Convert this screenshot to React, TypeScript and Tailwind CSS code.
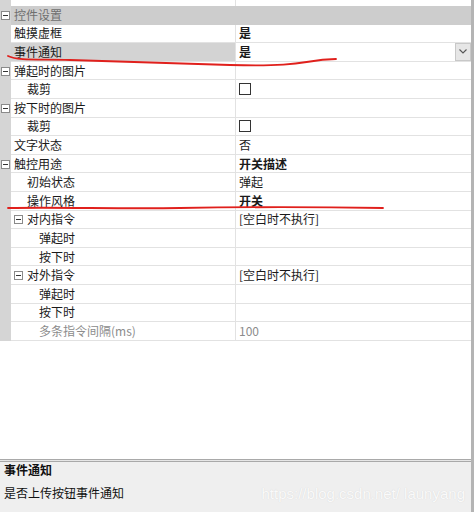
import React from 'react';

type Row = {
  name: string;
  value?: string;
  level: number; // indentation inside the name column
  margin?: boolean; // collapse box in the left gutter
  inner?: boolean; // collapse box inside the name column
  bold?: boolean;
  check?: boolean;
  dim?: boolean;
  selected?: boolean;
  category?: boolean;
};

const ROWS: Row[] = [
  { name: '控件设置', level: 0, margin: true, category: true },
  { name: '触摸虚框', value: '是', level: 0, bold: true },
  { name: '事件通知', value: '是', level: 0, bold: true, selected: true },
  { name: '弹起时的图片', level: 0, margin: true },
  { name: '裁剪', level: 1, check: true },
  { name: '按下时的图片', level: 0, margin: true },
  { name: '裁剪', level: 1, check: true },
  { name: '文字状态', value: '否', level: 0 },
  { name: '触控用途', value: '开关描述', level: 0, margin: true, bold: true },
  { name: '初始状态', value: '弹起', level: 1 },
  { name: '操作风格', value: '开关', level: 1, bold: true },
  { name: '对内指令', value: '[空白时不执行]', level: 1, inner: true },
  { name: '弹起时', level: 2 },
  { name: '按下时', level: 2 },
  { name: '对外指令', value: '[空白时不执行]', level: 1, inner: true },
  { name: '弹起时', level: 2 },
  { name: '按下时', level: 2 },
  { name: '多条指令间隔(ms)', value: '100', level: 2, dim: true },
];

function MinusBox() {
  return (
    <svg width="9" height="9" viewBox="0 0 9 9" className="shrink-0">
      <rect x="0.5" y="0.5" width="8" height="8" fill="#fff" stroke="#8a8a8a" />
      <path d="M2 4.5h5" stroke="#333" strokeWidth="1" />
    </svg>
  );
}

function PropRow({ row }: { row: Row }) {
  const pad = row.level === 0 ? 'pl-[3px]' : row.level === 1 ? 'pl-[16px]' : 'pl-[28px]';
  return (
    <div className="flex h-[18.6px] items-stretch">
      <div className="flex w-[11px] shrink-0 items-center justify-center bg-[#d5d5d5]">
        {row.margin && <MinusBox />}
      </div>
      {row.category ? (
        <div className="flex flex-1 items-center bg-[#cdcdcd] pl-[3px] text-[#6f6f6f]">{row.name}</div>
      ) : (
        <>
          <div
            className={`flex w-[225px] shrink-0 items-center border-b border-r border-[#e2e2e2] ${pad} ${
              row.selected ? 'bg-[#d3d3d3]' : 'bg-white'
            } ${row.dim ? 'text-[#8c8c8c]' : 'text-[#1a1a1a]'}`}
          >
            {row.inner && (
              <span className="-ml-[13px] mr-[4px] flex">
                <MinusBox />
              </span>
            )}
            {row.name}
          </div>
          <div
            className={`flex flex-1 items-center border-b border-[#e2e2e2] bg-white pl-[3px] ${
              row.bold ? 'font-bold' : ''
            } ${row.dim ? 'text-[#8c8c8c]' : 'text-[#1a1a1a]'}`}
          >
            {row.check && <span className="h-[12px] w-[12px] border border-[#333] bg-white" />}
            <span className="flex-1">{row.value}</span>
            {row.selected && (
              <span className="flex h-full w-[16px] items-center justify-center border border-[#c8c8c8] bg-[#e6e6e6]">
                <svg width="8" height="5" viewBox="0 0 8 5">
                  <path d="M0.5 0.5L4 4L7.5 0.5" fill="none" stroke="#555" strokeWidth="1.1" />
                </svg>
              </span>
            )}
          </div>
        </>
      )}
    </div>
  );
}

export default function App() {
  return (
    <div
      className="relative flex h-[512px] w-[474px] flex-col overflow-hidden border-r-[3px] border-[#b4b4b4] bg-white text-[12px] leading-none"
      style={{ fontFamily: '"Noto Sans CJK SC", "Noto Sans", sans-serif' }}
    >
      {/* sliver of the row scrolled off the top */}
      <div className="flex h-[6px]">
        <div className="w-[11px] bg-[#d5d5d5]" />
        <div className="w-[225px] border-r border-[#e2e2e2]" />
      </div>

      {ROWS.map((r, i) => (
        <PropRow key={i} row={r} />
      ))}

      <div className="flex-1 bg-white" />

      {/* help panel */}
      <div className="h-[3px] border-y border-[#a9a9a9] bg-[#e6e6e6]" />
      <div className="relative flex h-[50px] flex-col gap-[11px] bg-[#efefef] px-[4px] pt-[2px] text-[#111]">
        <div className="font-bold">事件通知</div>
        <div>是否上传按钮事件通知</div>
        <div
          className="absolute bottom-[11px] right-[6px] text-[15px] text-[#fafafa]"
          style={{ fontFamily: '"Liberation Sans", sans-serif', textShadow: '0 0 1px #d0d0d0' }}
        >
          https://blog.csdn.net/ launyang
        </div>
      </div>

      {/* red pen marks */}
      <svg className="pointer-events-none absolute left-0 top-0" width="474" height="512">
        <path
          d="M8 56 C18 61 40 59 70 60 S150 63 230 65 S300 60 336 59"
          fill="none"
          stroke="#e0201c"
          strokeWidth="1.8"
          strokeLinecap="round"
        />
        <path
          d="M8 208 C60 207 120 209 180 208 S320 207 383 208"
          fill="none"
          stroke="#e0201c"
          strokeWidth="1.8"
          strokeLinecap="round"
        />
      </svg>
    </div>
  );
}
